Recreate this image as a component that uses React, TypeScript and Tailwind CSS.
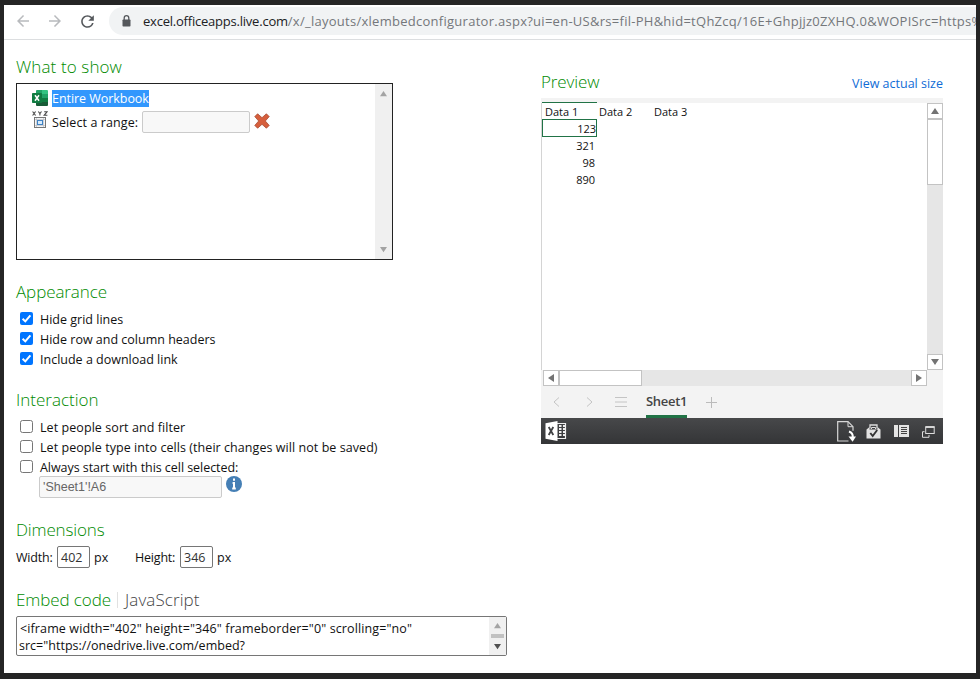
import type { ReactNode } from 'react';
import { MdArrowBack, MdArrowForward, MdRefresh } from 'react-icons/md';

const appearance = ['Hide grid lines', 'Hide row and column headers', 'Include a download link'];

const interaction = [
  { label: 'Let people sort and filter', className: 'tracking-[0.07px]' },
  { label: 'Let people type into cells (their changes will not be saved)', className: 'tracking-[0.06px]' },
  { label: 'Always start with this cell selected:', className: 'tracking-[-0.05px]' },
];

const cells = ['123', '321', '98', '890'];

const Heading = ({ children, className = '' }: { children: ReactNode; className?: string }) => (
  <h2 className={`flex h-6 items-center text-[17px] font-light whitespace-nowrap text-[#008a00] ${className}`}>
    {children}
  </h2>
);

const Check = ({ label, checked = false, className = '' }: { label: string; checked?: boolean; className?: string }) => (
  <label className="flex h-5 items-center pl-1 whitespace-nowrap">
    {checked ? (
      <svg className="mb-px size-[13px] shrink-0" viewBox="0 0 13 13">
        <rect width="13" height="13" rx="2" fill="#0075ff" />
        <path d="M2.6 6.8 5.3 9.4 10.4 3.4" fill="none" stroke="#fff" strokeWidth="2" />
      </svg>
    ) : (
      <span className="mb-px size-[13px] shrink-0 rounded-[2.5px] border border-[#767676]" />
    )}
    <span className={`mt-0.5 ml-[7px] ${className}`}>{label}</span>
  </label>
);

const Triangle = ({ d, fill, className }: { d: string; fill: string; className: string }) => (
  <svg className={className} viewBox="0 0 8 8">
    <path d={d} fill={fill} />
  </svg>
);

const UP = 'M0 7 4 1 8 7Z';
const DOWN = 'M0 1 4 7 8 1Z';
const LEFT = 'M7 0 1 4 7 8Z';
const RIGHT = 'M1 0 7 4 1 8Z';

const ScrollButton = ({ d }: { d: string }) => (
  <span className="flex size-4 shrink-0 items-center justify-center border border-[#c3c3c3] bg-white">
    <Triangle d={d} fill="#737373" className="size-2" />
  </span>
);

const BrowserBar = () => (
  <header className="flex h-[35px] items-start border-b border-[#dcdee0] bg-white pl-[10px]">
    <div className="flex h-8 w-[95px] items-center gap-[14px]">
      <MdArrowBack className="size-[18px] text-[#b8babd]" />
      <MdArrowForward className="size-[18px] text-[#b8babd]" />
      <MdRefresh className="size-[19px] text-[#55585c]" />
    </div>
    <div className="mt-[2px] flex h-7 min-w-0 flex-1 items-center overflow-hidden rounded-l-full bg-[#f1f3f4] pl-[13px]">
      <svg className="h-3 w-[9px] shrink-0" viewBox="0 0 9 12">
        <rect x="0.5" y="4.5" width="8" height="7" rx="0.8" fill="#55585c" />
        <path d="M2.2 5V3a2.3 2.3 0 0 1 4.6 0v2" fill="none" stroke="#55585c" strokeWidth="1.3" />
      </svg>
      <span className="mt-0.5 ml-[12px] text-[13px] tracking-[0.27px] whitespace-nowrap text-[#74777b]">
        <span className="tracking-[-0.22px] text-[#202124]">excel.officeapps.live.com</span>
        /x/_layouts/xlembedconfigurator.aspx?ui=en-US&amp;rs=fil-PH&amp;hid=tQhZcq/16E+Ghpjjz0ZXHQ.0&amp;WOPISrc=https%
      </span>
    </div>
  </header>
);

const RangePicker = () => (
  <div className="mt-1 flex h-[177px] w-[377px] border border-[#222]">
    <div className="flex-1 pt-[5px] pl-[15px]">
      <div className="flex h-[18px] items-center">
        <svg className="mb-px size-4" viewBox="0 0 16 16">
          <path d="M5 0h5.500v4H4V1a1 1 0 0 1 1-1Z" fill="#21a366" />
          <path d="M10 0h5a1 1 0 0 1 1 1v3h-6Z" fill="#33c481" />
          <path d="M4 4h6v4H4Z" fill="#107c41" />
          <path d="M10 4h6v4h-6Z" fill="#21a366" />
          <path d="M4 8h6v4H4Z" fill="#185c37" />
          <path d="M10 8h6v4h-6Z" fill="#107c41" />
          <path d="M4 12h12v3a1 1 0 0 1-1 1H5a1 1 0 0 1-1-1Z" fill="#185c37" />
          <rect y="3" width="10" height="10" rx="0.8" fill="#107c41" />
          <path d="m3 5.300 4 5.400M7 5.300l-4 5.400" stroke="#fff" strokeWidth="1.500" />
        </svg>
        <span className="mt-px ml-1 h-[17px] w-[97px] bg-[#3297fd] leading-[17px] tracking-[-0.05px] whitespace-nowrap text-white">
          Entire Workbook
        </span>
      </div>
      <div className="mt-1 flex h-[22px] items-center">
        <svg className="mb-[5px] h-[17px] w-4 shrink-0" viewBox="0 0 16 17">
          <g fill="none" stroke="#4a4a4a" strokeWidth="1.1">
            <path d="m0.600 0.500 3 4M3.600 0.500l-3 4M6.300 0.500l1.600 2 1.600-2M7.900 2.500v2M12.200 0.700h3l-3 3.600h3.200" />
          </g>
          <rect x="2.500" y="6.500" width="11" height="10" fill="#f4f6f8" stroke="#777" />
          <path d="M3 8.500h10M3 14.500h10M4.500 7v9M11.500 7v9" stroke="#b5b9bd" strokeWidth="0.6" />
          <rect x="5.500" y="9.500" width="5" height="4" fill="#d8ebfc" stroke="#3f82c4" />
        </svg>
        <span className="mt-0.5 ml-1 w-[90px] tracking-[0.1px] whitespace-nowrap">Select a range:</span>
        <span className="h-[22px] w-[108px] rounded-[2px] border border-[#cbcbcb] bg-[#f8f8f8]" />
        <svg className="mb-[2px] ml-1 size-4" viewBox="0 0 16 16">
          <path
            d="M3.600 0.800 8 4.700l4.400-3.900 2.800 2.800L11.300 8l3.900 4.400-2.800 2.800L8 11.300l-4.400 3.900-2.800-2.800L4.700 8 0.800 3.600Z"
            fill="#d65f3d"
            stroke="#a84a31"
            strokeWidth="0.8"
            strokeLinejoin="round"
          />
        </svg>
      </div>
    </div>
    <div className="flex w-[17px] flex-col items-center justify-between bg-[#f0f0f0] py-[6px]">
      <Triangle d={UP} fill="#a3a3a3" className="size-[7px]" />
      <Triangle d={DOWN} fill="#a3a3a3" className="size-[7px]" />
    </div>
  </div>
);

const Settings = () => (
  <section className="w-[537px] pt-[15px] pl-3">
    <Heading className="tracking-[0.12px]">
      <span>What to show</span>
    </Heading>
    <RangePicker />

    <Heading className="mt-5 tracking-[-0.1px]">
      <span>Appearance</span>
    </Heading>
    <div className="mt-[5px]">
      {appearance.map((label) => (
        <Check key={label} label={label} checked />
      ))}
    </div>

    <Heading className="mt-[19px]">
      <span>Interaction</span>
    </Heading>
    <div className="mt-[5px]">
      {interaction.map((item) => (
        <Check key={item.label} {...item} />
      ))}
    </div>
    <div className="-mt-px flex pl-[23px]">
      <span className="flex h-[22px] w-[183px] items-center rounded-[2px] border border-[#cbcbcb] bg-[#f8f8f8] pt-px pl-[3px] font-['Liberation_Sans',sans-serif] text-[#666]">
        'Sheet1'!A6
      </span>
      <svg className="ml-1 size-4" viewBox="0 0 16 16">
        <circle cx="8" cy="8" r="8" fill="#457fb5" />
        <path d="M8 2.500v2.300M6.600 7H8v5.500M6.200 12.500h3.600" fill="none" stroke="#fff" strokeWidth="2" />
      </svg>
    </div>

    <Heading className="mt-5 tracking-[-0.15px]">
      <span>Dimensions</span>
    </Heading>
    <div className="mt-1 flex h-[22px] items-center whitespace-nowrap">
      <span className="mt-0.5 w-[41px] tracking-[-0.2px]">Width:</span>
      <span className="flex h-[22px] w-[33px] items-center rounded-[2px] border border-[#767676] pt-[2px] pl-[3px] text-[#333]">
        402
      </span>
      <span className="mt-0.5 ml-1 w-[41px]">px</span>
      <span className="mt-0.5 w-[45px] tracking-[-0.2px]">Height:</span>
      <span className="flex h-[22px] w-[33px] items-center rounded-[2px] border border-[#767676] pt-[2px] pl-[3px] text-[#333]">
        346
      </span>
      <span className="mt-0.5 ml-1">px</span>
    </div>

    <Heading className="mt-5">
      <span className="w-[101px] tracking-[-0.1px]">Embed code</span>
      <span className="mr-[7px] h-4 w-px bg-[#e1e1e1]" />
      <span className="tracking-[0.1px] text-[#444]">JavaScript</span>
    </Heading>
    <div className="mt-1 flex h-10 w-[491px] rounded-[2px] border border-[#767676]">
      <div className="flex-1 pt-[3px] pl-[3px] leading-[17px] whitespace-nowrap">
        <p className="tracking-[0.12px]">&lt;iframe width="402" height="346" frameborder="0" scrolling="no"</p>
        <p className="-ml-px tracking-[0.02px]">src="https://onedrive.live.com/embed?</p>
      </div>
      <div className="flex w-[17px] flex-col items-center justify-between bg-[#f0f0f0] py-[5px]">
        <Triangle d={UP} fill="#a3a3a3" className="size-[7px]" />
        <span className="h-1 w-[13px] bg-[#c1c1c1]" />
        <Triangle d={DOWN} fill="#505050" className="size-[7px]" />
      </div>
    </div>
  </section>
);

const Sheet = () => (
  <div className="flex h-[267px]">
    <div className="flex-1 border-l border-[#d4d4d4] bg-white text-[11px] text-[#111]">
      <div className="-mt-px flex h-[17px]">
        <span className="w-[55px] border-t border-[#217346] pl-[3px] leading-[17px]">Data 1</span>
        <span className="w-[55px] pt-px pl-[2px] leading-[17px]">Data 2</span>
        <span className="w-[55px] pt-px pl-[2px] leading-[17px]">Data 3</span>
      </div>
      {cells.map((value, i) => (
        <div
          key={value}
          className={
            i === 0
              ? 'h-[18px] w-[55px] border border-[#217346] text-right leading-[18px]'
              : 'h-[17px] w-[53px] text-right leading-[17px]'
          }
        >
          {value}
        </div>
      ))}
    </div>
    <div className="flex w-4 flex-col bg-[#e6e6e6]">
      <ScrollButton d={UP} />
      <span className="h-[66px] border border-[#c3c3c3] bg-white" />
      <span className="flex-1" />
      <ScrollButton d={DOWN} />
    </div>
  </div>
);

const PreviewFooter = () => (
  <div className="flex h-[26px] items-center bg-gradient-to-b from-[#47484a] to-[#343537] pl-[4px]">
    <svg className="h-5 w-[22px]" viewBox="0 0 22 20">
      <path d="M0.500 2.200 12.500 0v20L0.500 17.800Z" fill="#fff" />
      <path d="M12 2.500h8.500v15H12" fill="none" stroke="#eee" strokeWidth="1.200" />
      <path d="M14 5h2.500M18 5h2M14 8h2.500M18 8h2M14 11h2.500M18 11h2M14 14h2.500M18 14h2" stroke="#eee" strokeWidth="1.800" />
      <path d="m3.700 6 4.600 8M8.300 6l-4.600 8" stroke="#414244" strokeWidth="1.800" />
    </svg>
    <div className="ml-auto flex items-center pr-2">
      <svg className="h-[21px] w-[19px]" viewBox="0 0 19 21">
        <path d="M11.500 20H0.700V0.700H11l5 5v4" fill="none" stroke="#d8d8d8" strokeWidth="1.200" />
        <path d="M11 0.700v5h5" fill="none" stroke="#d8d8d8" />
        <path d="M12 10.500c3 1 4 3 3.800 6" fill="none" stroke="#fff" strokeWidth="2" />
        <path d="M11.500 15.500H19l-3.400 5.300Z" fill="#fff" />
      </svg>
      <svg className="ml-[10px] h-[15px] w-[15px]" viewBox="0 0 15 15">
        <path d="M0.500 5.500 3.500 3v2.500h8V3l3 2.500v9h-14Z" fill="#e2e2e2" />
        <path d="M4 4.500V1h7v3.500" fill="none" stroke="#ddd" strokeWidth="1.300" />
        <path d="M5.500 5V3.500h4V5" fill="none" stroke="#ddd" />
        <path d="m4.300 9 2.400 3 4.500-6" fill="none" stroke="#333" strokeWidth="1.900" />
      </svg>
      <svg className="mb-px ml-[13px] h-3 w-[15px]" viewBox="0 0 15 12">
        <path d="M0 0h4v12H0ZM5 0h10v12H5Z" fill="#e4e4e4" />
        <path d="M7 2.500h6M7 4.500h6M7 6.500h6M7 8.500h6" stroke="#444" />
      </svg>
      <svg className="mt-[1px] ml-[13px] h-3 w-[13px]" viewBox="0 0 13 12">
        <rect x="3.700" y="1" width="8.500" height="6.500" fill="none" stroke="#ddd" />
        <path d="M3.500 1h9" stroke="#ddd" strokeWidth="1.800" />
        <path d="M2.500 5.700h-2v5.600H7V9" fill="none" stroke="#ddd" />
      </svg>
    </div>
  </div>
);

const Preview = () => (
  <section className="w-[402px] pt-[30px]">
    <div className="flex h-6 items-center justify-between whitespace-nowrap">
      <Heading className="tracking-[-0.1px]">
        <span>Preview</span>
      </Heading>
      <a className="mt-1 text-[#0f6cd6]">View actual size</a>
    </div>
    <div className="mt-1 bg-[#f3f3f3] pt-[5px]">
      <Sheet />
      <div className="flex h-4 pr-4 pl-[2px]">
        <div className="flex flex-1 bg-[#e6e6e6]">
          <ScrollButton d={LEFT} />
          <span className="w-[83px] border border-[#c3c3c3] bg-white" />
          <span className="flex-1" />
          <ScrollButton d={RIGHT} />
        </div>
      </div>
      <div className="flex h-8 items-center pl-[12px]">
        <svg className="h-8 w-[78px]" viewBox="0 0 78 32">
          <path
            d="m6 11.500-5 4.500 5 4.500M34 11.500l5 4.500-5 4.500M62 11.500h12M62 16h12M62 20.500h12"
            fill="none"
            stroke="#c4c4c4"
          />
        </svg>
        <span className="ml-[15px] flex h-8 w-[41px] items-center border-b-[3px] border-[#217346] pt-[2px] text-[13px] font-semibold tracking-[-0.3px] text-[#444]">
          Sheet1
        </span>
        <svg className="ml-[19px] size-[11px]" viewBox="0 0 11 11">
          <path d="M5.500 0v11M0 5.500h11" stroke="#bbb" />
        </svg>
      </div>
      <PreviewFooter />
    </div>
  </section>
);

const App = () => (
  <div className="h-[679px] w-[980px] overflow-hidden bg-[#252525] px-1 pt-[5px] pb-[6px] font-['Open_Sans','Noto_Sans',sans-serif] text-[12.5px] text-[#111]">
    <div className="h-full overflow-hidden bg-white">
      <BrowserBar />
      <main className="flex">
        <Settings />
        <Preview />
      </main>
    </div>
  </div>
);

export default App;
